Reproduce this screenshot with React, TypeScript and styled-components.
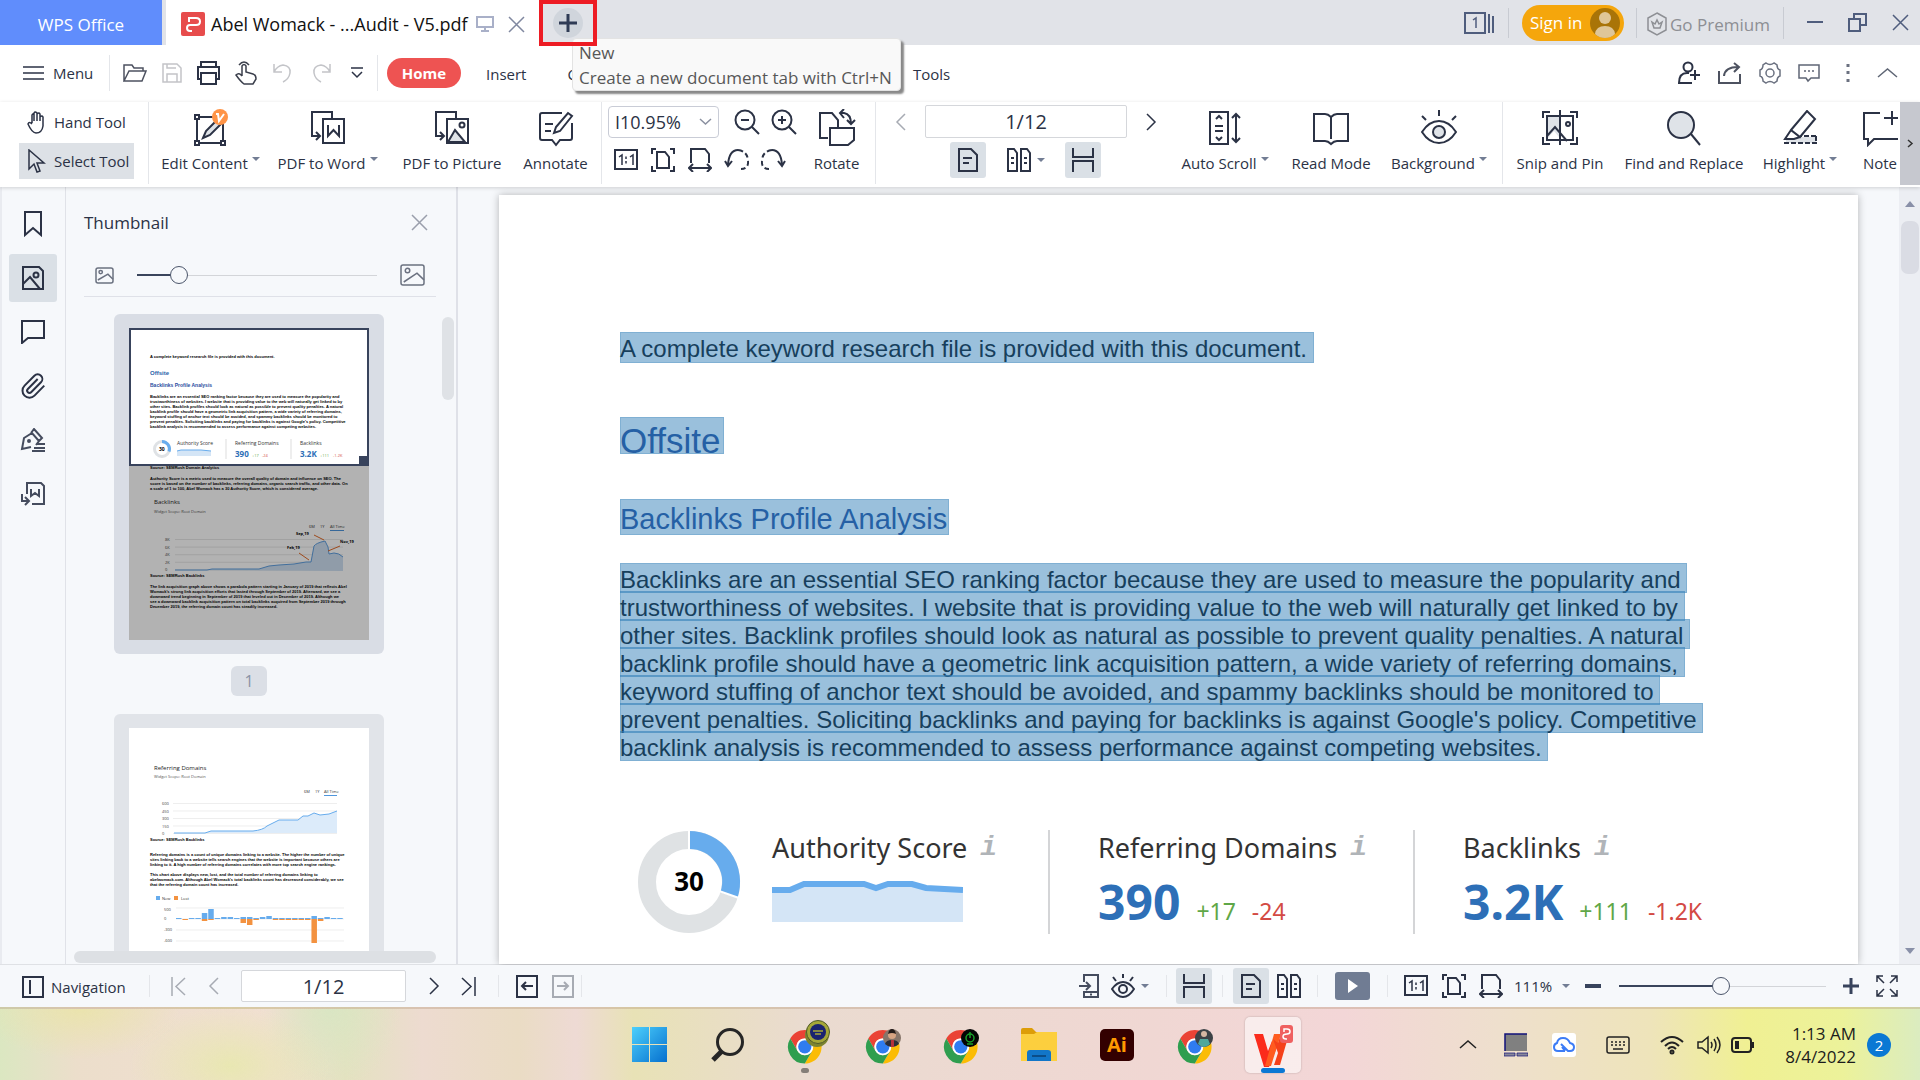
import React, { useState } from 'react';
import styled, { createGlobalStyle } from 'styled-components';

const INK = '#2b3245';
const UI = "'Open Sans', 'Noto Sans', sans-serif";
const DOC = "'Liberation Sans', Arial, sans-serif";

const GlobalStyle = createGlobalStyle`
  *, *::before, *::after { box-sizing: border-box; }
  html, body, #root { height: 100%; }
  body { margin: 0; overflow: hidden; font-family: ${UI}; color: ${INK}; }
  button, input, select { font: inherit; color: inherit; margin: 0; padding: 0; border: 0; background: none; }
  button { cursor: pointer; }
  p, h1, h2, h3 { margin: 0; font-weight: 400; }
  svg { display: block; flex: none; }
`;

/* ---------- icons ---------- */

type IconProps = { w: number; h?: number; c?: string; s?: number; children: React.ReactNode };
const Icon = ({ w, h = w, c = INK, s = 2, children }: IconProps) => (
  <svg width={w} height={h} viewBox={`0 0 ${w} ${h}`} fill="none" stroke={c} strokeWidth={s} aria-hidden="true">
    {children}
  </svg>
);

const OneToOne = () => (
  <Icon w={24}>
    <rect x="1" y="2" width="22" height="19" />
    <path d="M5 9l3-2v10M16 9l3-2v10M12 8.500v2.500M12 13v2.500" strokeWidth="1.500" />
  </Icon>
);
const FitPage = () => (
  <Icon w={24}>
    <path d="M6 4h8l4 5v11H6z" />
    <path d="M1 6V1h4M19 1h4v5M1 18v5h4M19 23h4v-5" />
  </Icon>
);
const FitWidth = () => (
  <Icon w={24}>
    <path d="M3 15V1h14l4 5v9M1 20h22M5 16l-4 4 4 4M19 16l4 4-4 4" />
  </Icon>
);
const SinglePage = () => (
  <Icon w={24}>
    <path d="M3 1h12l6 6v16H3z M7 10h9M7 15h6" />
  </Icon>
);
const TwoPages = () => (
  <Icon w={24}>
    <path d="M1 1h6l3 4v18H1z M14 1h6l3 4v18h-9z M4 10h3M4 15h3M17 10h3M17 15h3" />
  </Icon>
);
const Continuous = () => (
  <Icon w={24}>
    <path d="M2 0v9h20V0M2 24V13h20v11" />
  </Icon>
);
const Chevron = ({ dir, c = INK, w = 12, h = 18 }: { dir: string; c?: string; w?: number; h?: number }) => {
  const d: Record<string, string> = {
    left: `M${w - 2} 1L2 ${h / 2}L${w - 2} ${h - 1}`,
    right: `M2 1L${w - 2} ${h / 2}L2 ${h - 1}`,
    up: `M1 ${h - 2}L${w / 2} 2L${w - 1} ${h - 2}`,
    down: `M1 2L${w / 2} ${h - 2}L${w - 1} 2`,
  };
  return <Icon w={w} h={h} c={c} s={1.5}><path d={d[dir]} /></Icon>;
};
const Cross = ({ size = 17, c = '#7c869b' }) => (
  <Icon w={size} c={c} s={1.5}><path d={`M1 1L${size - 1} ${size - 1}M${size - 1} 1L1 ${size - 1}`} /></Icon>
);
const Picture = ({ w, h, c = '#6b7180' }: { w: number; h: number; c?: string }) => (
  <Icon w={w} h={h} c={c} s={1.5}>
    <rect x="1" y="1" width={w - 2} height={h - 2} rx="2" />
    <circle cx={w * 0.3} cy={h * 0.3} r={w * 0.09} />
    <path d={`M${w * 0.15} ${h - 4}L${w * 0.68} ${h * 0.42}L${w - 1} ${h * 0.72}`} />
  </Icon>
);
const ToWord = () => (
  <Icon w={36}>
    <path d="M2 24V2h20v7M2 23v3h7M6 22l4 4-4 4" />
    <rect x="13" y="9" width="21" height="24" fill="#fff" />
    <path d="M18 15v11l5.500-6 5.500 6V15" />
  </Icon>
);
const ToPicture = () => (
  <Icon w={36}>
    <path d="M2 24V2h20v7M2 23v3h7M6 22l4 4-4 4" />
    <rect x="13" y="9" width="21" height="24" fill="#fff" />
    <path d="M14 32l7-12 10 12z" fill="#dfe3e8" />
    <circle cx="28" cy="15" r="2.500" />
  </Icon>
);
const EditContent = () => (
  <Icon w={36} h={38}>
    <path d="M4 8h26v26H4z" />
    <path d="M2 6h4v4H2zM2 32h4v4H2zM28 32h4v4h-4z" fill="#fff" />
    <path d="M10 29l3-7 12-12 4 4-12 12z" fill="#dfe3e8" />
    <circle cx="27" cy="8" r="8" fill="#ff9447" stroke="none" />
    <path d="M23 5h2l1 7 5-7" stroke="#fff" />
  </Icon>
);
const Annotate = () => (
  <Icon w={36} h={38}>
    <path d="M24 4H4q-2 0-2 2v23q0 2 2 2h10l4 5 4-5h10q2 0 2-2V14M7 15h8M7 22h6" />
    <path d="M16 24l2-6L30 4l4 3-12 15z" fill="#fff" />
  </Icon>
);
const Magnifier = ({ sign }: { sign: string }) => (
  <Icon w={26}>
    <circle cx="11" cy="11" r="9.500" />
    <path d={`M18 18l7 7M7 11h8${sign === '+' ? 'M11 7v8' : ''}`} />
  </Icon>
);
const Turn = ({ cw }: { cw?: boolean }) => (
  <svg width="25" height="22" viewBox="0 0 25 22" fill="none" stroke={INK} strokeWidth="2" aria-hidden="true">
    <g transform={cw ? 'matrix(-1 0 0 1 25 0)' : undefined}>
      <path d="M14 1Q5 1 4 16M1 12l3 5 4-5" />
      <path d="M14 1q9 1 10 10t-7 9" strokeDasharray="5 3" />
    </g>
  </svg>
);
const Rotate = () => (
  <Icon w={38}>
    <path d="M10 29H2V4h12l6 7v7M22 4h4q7 1 7 11M26 0l-4 4 4 5M29 11l4 4 4-4" />
    <path d="M12 19h24v12l-6 5H12z" fill="#fff" />
  </Icon>
);
const AutoScroll = () => (
  <Icon w={32} h={36}>
    <rect x="1" y="2" width="18" height="32" />
    <path d="M7 9l3-3 3 3M7 27l3 3 3-3M6 16h8M6 21h8M27 4v28M23 8l4-4 4 4M23 28l4 4 4-4" />
  </Icon>
);
const ReadMode = () => (
  <Icon w={36} h={36}>
    <path d="M18 7q-3-3-6-3H1v27h11q3 0 6 3 3-3 6-3h11V4H24q-3 0-6 3zM18 7v22" />
  </Icon>
);
const Eye = () => (
  <Icon w={36} h={36}>
    <path d="M1 22q7-11 17-11t17 11q-7 11-17 11T1 22zM18 0v6M1 6l4 4M35 6l-4 4" />
    <circle cx="18" cy="22" r="6" fill="#dfe3e8" />
  </Icon>
);
const SmallEye = () => (
  <Icon w={24} h={26}>
    <path d="M1 16q5-7 11-7t11 7q-5 8-11 8T1 16zM12 1v4M2 4l3 4M22 4l-3 4" />
    <circle cx="12" cy="16" r="4" />
  </Icon>
);
const Snip = () => (
  <Icon w={36} h={36}>
    <rect x="5" y="6" width="26" height="24" />
    <path d="M6 7h11v20l-5-6-6 7z" fill="#dfe3e8" stroke="none" />
    <path d="M1 8V2h7M28 2h7v6M1 27v7h7M28 34h7v-7M18 0v35M5 26l8-9 12 14" />
    <circle cx="26" cy="14" r="2" />
  </Icon>
);
const Find = () => (
  <Icon w={34} h={36}>
    <circle cx="14" cy="15" r="13" fill="#dfe3e8" />
    <path d="M24 24l9 11" />
  </Icon>
);
const Highlight = () => (
  <Icon w={36} h={36}>
    <rect x="4" y="27" width="30" height="6" fill="#dfe3e8" stroke="none" />
    <path d="M2 33h33M34 26H18M34 26v7" strokeDasharray="5 2" />
    <path d="M9 20L25 1l8 8-15 18zM9 20l-6 9h9l6-2" fill="#fff" />
  </Icon>
);
const Note = () => (
  <Icon w={36} h={38}>
    <path d="M18 4H2v26h4v6l6-6h24M30 2v14M22 9h14" />
  </Icon>
);
const Wps = () => (
  <svg width="40" height="44" viewBox="0 0 40 44" aria-hidden="true">
    <path d="M1 11h9l5 17 4-10 5 6-8 20h-5z" fill="#fb2b1c" />
    <path d="M21 11h7l-10 32h-6z" fill="#ff5b1f" />
    <path d="M20 16l5 14-4 12h6l9-31h-8l-3 9z" fill="#f5411a" />
    <rect x="27" y="2" width="13" height="18" rx="3" fill="#ef6060" />
    <path d="M31 9V6h3q3 0 3 2.500T34 11q-4 0-4 2.500T33 16h1" fill="none" stroke="#fff" strokeWidth="1.500" />
  </svg>
);
const Chrome = ({ badge }: { badge: 'crest' | 'man' | 'power' | 'teal' }) => (
  <svg width="50" height="50" viewBox="-7 0 50 50" aria-hidden="true">
    <g transform="translate(1 10) scale(.7)">
      <path d="M24 12H44.780A24 24 0 0 0 3.217 12.005L13.608 30A12 12 0 0 1 24 12z" fill="#ea4335" />
      <path d="M34.390 30L24 48A24 24 0 0 0 44.780 12H24A12 12 0 0 1 34.390 30z" fill="#fbbc05" />
      <path d="M13.607 30L3.215 12A24 24 0 0 0 24 48L34.396 30A12 12 0 0 1 13.607 30z" fill="#2f9e4f" />
      <circle cx="24" cy="24" r="12" fill="#fff" />
      <circle cx="24" cy="24" r="9.500" fill="#2f7cf0" />
    </g>
    {badge === 'crest' && (
      <g>
        <circle cx="30" cy="15" r="12" fill="#7d8430" />
        <circle cx="31" cy="12" r="11.500" fill="#a5a738" stroke="#4f5a2a" />
        <circle cx="31" cy="12" r="8" fill="#1a2370" />
        <path d="M26 11h10M28 14h6" stroke="#a5a738" strokeWidth="1.500" />
      </g>
    )}
    {badge === 'man' && (
      <g>
        <circle cx="27" cy="18" r="9" fill="#86756a" />
        <path d="M20 24q1-4 7-4t7 4q-3 3-7 3t-7-3z" fill="#2b2d38" />
        <path d="M26 20h3v7h-3z" fill="#b5313a" />
        <circle cx="27" cy="15" r="4" fill="#d6a483" />
        <path d="M23 14q1-5 4-5t4 5q-4-2-8 0z" fill="#241c1a" />
      </g>
    )}
    {badge === 'power' && (
      <g>
        <circle cx="27" cy="18" r="9" fill="#050505" />
        <circle cx="27" cy="18" r="4" fill="none" stroke="#18a02a" strokeWidth="1.500" />
        <path d="M27 12v6M24 24h6" stroke="#18a02a" strokeWidth="1.500" />
      </g>
    )}
    {badge === 'teal' && (
      <g>
        <circle cx="27" cy="18" r="9" fill="#3c4246" />
        <path d="M21 24l2-5h8l2 5q-3 3-6 3t-6-3z" fill="#4fa79c" />
        <circle cx="27" cy="14" r="3" fill="#d5b7a2" />
      </g>
    )}
  </svg>
);

/* ---------- shared controls ---------- */

const Shell = styled.div`
  height: 100vh;
  display: flex;
  flex-direction: column;
  overflow: hidden;
`;
const Slot = styled.button<{ $w: number; $h?: number; $on?: boolean }>`
  width: ${p => p.$w}px;
  height: ${p => p.$h ?? 36}px;
  flex: none;
  display: flex;
  align-items: center;
  justify-content: center;
  gap: 6px;
  border-radius: 3px;
  && { background: ${p => (p.$on ? '#dae0e6' : 'transparent')}; }
`;
const Rule = styled.span<{ $h: number; $c?: string; $m?: number }>`
  width: 1px;
  height: ${p => p.$h}px;
  flex: none;
  margin-left: ${p => p.$m ?? 0}px;
  background: ${p => p.$c ?? '#e4e6ea'};
`;
const Gap = styled.span<{ $w?: number }>`
  flex: ${p => (p.$w ? 'none' : 1)};
  width: ${p => (p.$w ? p.$w + 'px' : 'auto')};
`;
const Caret = styled.span<{ $up?: boolean }>`
  width: 0;
  height: 0;
  flex: none;
  align-self: ${p => (p.$up ? 'flex-start' : 'center')};
  margin-top: ${p => (p.$up ? 4 : 0)}px;
  border: 4px solid transparent;
  border-top-color: #727d94;
  border-bottom: 0;
`;

/* ---------- title bar ---------- */

const TitleBar = styled.header`
  height: 45px;
  flex: none;
  display: flex;
  align-items: center;
  background: #e1e3e8;
`;
const HomeTab = styled.button`
  && { width: 162px; height: 45px; padding-top: 3px; margin-right: 4px; background: #608dfc; color: #fff; font-size: 17px; }
`;
const DocTab = styled.div`
  width: 373px;
  height: 45px;
  padding: 3px 14px 0 15px;
  display: flex;
  align-items: center;
  background: #fff;
  color: #111;
  font-size: 18px;
  white-space: nowrap;
`;
const TabName = styled.span`
  flex: 1;
  margin-left: 6px;
`;
const NewTab = styled.button`
  && { width: 58px; height: 46px; border: 4px solid #ed1c24; }
  align-self: flex-start;
  display: grid;
  place-items: center;
  position: relative;
  z-index: 3;
  svg { border-radius: 50%; background: #d0d5dc; }
`;
const SignIn = styled.button`
  && { margin: 0 12px 0 13px; padding: 0 4px 0 8px; background: #f5a60c; color: #fff; font-size: 17px; }
  width: 102px;
  height: 36px;
  display: flex;
  align-items: center;
  justify-content: space-between;
  border-radius: 18px;
  white-space: nowrap;
`;
const Premium = styled.button`
  && { width: 146px; padding: 3px 0 0 9px; color: #8d8f94; font-size: 17px; }
  display: flex;
  align-items: center;
  gap: 2px;
  white-space: nowrap;
`;
const Tooltip = styled.div`
  position: absolute;
  z-index: 2;
  left: 572px;
  top: 38px;
  padding: 1px 8px 0 6px;
  height: 53px;
  border: 1px solid #e3e3e3;
  border-radius: 4px;
  background: #f9f9f9;
  box-shadow: 3px 3px 2px #888;
  color: #575757;
  font-size: 17px;
  line-height: 25px;
  white-space: nowrap;
`;

/* ---------- menu row ---------- */

const MenuRow = styled.nav`
  height: 57px;
  flex: none;
  padding-bottom: 2px;
  display: flex;
  align-items: center;
  background: #fff;
  font-size: 15px;
`;
const MenuButton = styled.button`
  && { width: 109px; height: 36px; padding-left: 23px; }
  display: flex;
  align-items: center;
  gap: 9px;
`;
const Pill = styled.button`
  && { margin: 0 12px 0 9px; background: #ee5352; color: #fff; font-weight: 700; }
  width: 74px;
  height: 30px;
  border-radius: 15px;
`;
const MenuTab = styled.button<{ $ml: number }>`
  && { margin-left: ${p => p.$ml}px; padding-top: 2px; }
`;

/* ---------- ribbon ---------- */

const RibbonBar = styled.section`
  height: 85px;
  flex: none;
  display: flex;
  background: #fff;
  position: relative;
  z-index: 1;
  box-shadow: 0 1px 4px rgba(0, 0, 0, 0.16);
  font-size: 15px;
`;
const Ribbon = styled.div`
  flex: 1;
  min-width: 0;
  margin-right: 2px;
  display: flex;
  overflow: hidden;
`;
const ModeGroup = styled.div`
  width: 148px;
  flex: none;
  padding: 2px 14px 0 19px;
  display: flex;
  flex-direction: column;
  gap: 3px;
`;
const Mode = styled.button<{ $on?: boolean }>`
  && { height: 36px; padding-left: 8px; background: ${p => (p.$on ? '#dde1e6' : 'transparent')}; }
  display: flex;
  align-items: center;
  gap: 8px;
  white-space: nowrap;
`;
const Tool = styled.button<{ $w: number }>`
  width: ${p => p.$w}px;
  height: 82px;
  flex: none;
  display: flex;
  flex-direction: column;
  align-items: center;
  white-space: nowrap;
`;
const ToolArt = styled.span`
  height: 51px;
  display: grid;
  place-items: center;
`;
const ToolLabel = styled.span`
  display: flex;
  gap: 4px;
  line-height: 20px;
`;
const TwoRows = styled.div`
  flex: none;
  padding-top: 3px;
  display: flex;
  flex-direction: column;
  gap: 4px;
`;
const Row = styled.div<{ $center?: boolean }>`
  display: flex;
  align-items: center;
  justify-content: ${p => (p.$center ? 'center' : 'flex-start')};
  height: 33px;
  & + & { height: 36px; }
`;
const Combo = styled.label`
  width: 111px;
  height: 32px;
  margin: 0 9px 0 1px;
  padding: 0 6px;
  display: flex;
  align-items: center;
  border: 1px solid #c9ccd6;
  border-radius: 4px;
  font-size: 18px;
  select { flex: 1; min-width: 0; appearance: none; outline: none; }
`;
const PageBox = styled.input<{ $w: number; $h: number }>`
  && {
    width: ${p => p.$w}px;
    height: ${p => p.$h}px;
    border: 1px solid #d5d7db;
    border-radius: 2px;
    background: #fff;
    text-align: center;
    font-size: 20px;
  }
`;
const More = styled.button`
  && { width: 20px; height: 83px; background: #c6c8cf; }
  display: grid;
  place-items: center;
`;

const RibbonTool = ({ w, label, caret, children }: { w: number; label: string; caret?: boolean; children: React.ReactNode }) => (
  <Tool $w={w}>
    <ToolArt>{children}</ToolArt>
    <ToolLabel>{label}{caret && <Caret $up />}</ToolLabel>
  </Tool>
);

/* ---------- workspace ---------- */

const Workspace = styled.div`
  flex: 1;
  min-height: 0;
  display: flex;
  background: #f6f8fb;
  border-bottom: 1px solid #dfe1e5;
`;
const Rail = styled.aside`
  width: 66px;
  flex: none;
  padding: 13px 0 0 7px;
  display: flex;
  flex-direction: column;
  gap: 6px;
  border-left: 2px solid #e9ebf0;
  border-right: 1px solid #e0e2e8;
`;
const Panel = styled.aside`
  width: 392px;
  flex: none;
  display: flex;
  flex-direction: column;
  border-right: 2px solid #dfe1e8;
`;
const PanelHead = styled.div`
  height: 67px;
  flex: none;
  padding: 4px 28px 0 18px;
  display: flex;
  align-items: center;
  justify-content: space-between;
  font-size: 17px;
`;
const SizeRow = styled.div`
  height: 43px;
  flex: none;
  margin: 0 20px 0 18px;
  padding: 0 11px;
  display: flex;
  align-items: center;
  justify-content: space-between;
  border-bottom: 1px solid #dfe1e8;
`;
const Slider = styled.input<{ $w: number; $dot: number }>`
  && { width: ${p => p.$w}px; height: 20px; appearance: none; outline: none; }
  &::-webkit-slider-runnable-track {
    height: 18px;
    background:
      linear-gradient(#3a455c, #3a455c) left center / var(--fill) 2px no-repeat,
      linear-gradient(#d3d5d9, #d3d5d9) left center / 100% 1px no-repeat;
  }
  &::-webkit-slider-thumb {
    appearance: none;
    width: ${p => p.$dot}px;
    height: ${p => p.$dot}px;
    border: 1px solid #4b556a;
    border-radius: 50%;
    background: #f6f8fb;
  }
`;
const ListArea = styled.div`
  flex: 1;
  min-height: 0;
  display: flex;
`;
const ThumbList = styled.div`
  flex: 1;
  overflow: hidden;
  padding: 17px 12px 0 2px;
  display: flex;
  flex-direction: column;
  align-items: center;
  gap: 12px;
`;
const Card = styled.div<{ $on?: boolean }>`
  width: 270px;
  flex: none;
  padding: 14px 15px;
  border-radius: 6px;
  background: ${p => (p.$on ? '#d9dde5' : '#e1e4e9')};
`;
const ThumbPage = styled.div`
  position: relative;
  width: 240px;
  height: 312px;
  padding-left: 21px;
  overflow: hidden;
  background: #fff;
  color: #000;
  font: 700 4px/5px ${DOC};
  white-space: nowrap;
`;
const Tiny = styled.p<{ $mt: number; $size?: number; $lh?: number; $c?: string }>`
  && { margin-top: ${p => p.$mt}px; font-weight: 700; }
  font-size: ${p => p.$size ?? 4}px;
  line-height: ${p => p.$lh ?? 5}px;
  color: ${p => p.$c ?? '#000'};
  white-space: pre;
`;
const TinyArt = styled.div<{ $mt: number }>`
  margin-top: ${p => p.$mt}px;
  text { font-family: ${UI}; font-weight: 400; stroke: none; }
  text.bold { font-weight: 700; }
`;
const Shade = styled.div`
  position: absolute;
  inset: 138px 0 0 0;
  background: rgba(0, 0, 0, 0.3);
`;
const ViewFrame = styled.div`
  position: absolute;
  inset: 0 0 174px 0;
  border: 2px solid #38435c;
  &::after {
    content: '';
    position: absolute;
    right: 0;
    bottom: 0;
    width: 8px;
    height: 8px;
    background: #38435c;
  }
`;
const PageNo = styled.span`
  width: 36px;
  height: 30px;
  margin-bottom: 6px;
  display: grid;
  place-items: center;
  flex: none;
  border-radius: 6px;
  background: #dbdfe6;
  color: #8a93a5;
  font-size: 16px;
`;
const VBar = styled.div`
  width: 14px;
  padding-top: 20px;
  &::before { content: ''; display: block; width: 12px; height: 83px; border-radius: 6px; background: #dfe2e6; }
`;
const HBar = styled.div`
  height: 13px;
  flex: none;
  padding: 0 20px 0 8px;
  &::before { content: ''; display: block; height: 12px; border-radius: 6px; background: #dde0e4; }
`;

/* ---------- document ---------- */

const Canvas = styled.main`
  flex: 1;
  min-width: 0;
  display: flex;
  padding: 8px 0 0 41px;
`;
const Sheet = styled.article`
  flex: 1;
  min-width: 0;
  margin-right: 41px;
  padding: 137px 121px 0;
  background: #fff;
  box-shadow: 0 0 8px rgba(0, 0, 0, 0.28);
  font-family: ${DOC};
  color: #173f5c;
  overflow: hidden;
  white-space: nowrap;
`;
const Mark = styled.span`
  display: inline-block;
  background: rgba(53, 129, 185, 0.5);
  box-shadow: inset 0 0 0 1px rgba(53, 129, 185, 0.25);
  white-space: pre;
`;
const Lead = styled.p`
  font-size: 24px;
  line-height: 33px;
  height: 31px;
  ${Mark} { height: 31px; }
`;
const H1 = styled.h1`
  && { margin-top: 54px; }
  height: 37px;
  font-size: 35px;
  line-height: 48px;
  color: #2560a5;
  ${Mark} { height: 37px; padding-right: 3px; }
`;
const H2 = styled.h2`
  && { margin-top: 45px; }
  height: 36px;
  font-size: 29px;
  line-height: 40px;
  color: #2560a5;
  ${Mark} { height: 36px; padding-right: 2px; }
`;
const Body = styled.div`
  margin-top: 28px;
  font-size: 24px;
  line-height: 34px;
  p { height: 28px; }
  ${Mark} { height: 30px; }
`;
const Stats = styled.div`
  margin-top: 71px;
  padding-left: 18px;
  display: flex;
  align-items: flex-start;
  font-family: 'Noto Sans', 'Open Sans', sans-serif;
  color: #333;
`;
const Stat = styled.div<{ $w: number; $line?: boolean }>`
  width: ${p => p.$w}px;
  height: 104px;
  flex: none;
  border-right: ${p => (p.$line ? '2px solid #d4d5d7' : '0')};
`;
const StatTitle = styled.h3`
  display: flex;
  align-items: center;
  gap: 13px;
  font-size: 27px;
  line-height: 36px;
  i { color: #b0b4b8; font: italic 700 28px/30px 'Liberation Mono', monospace; }
`;
const Figures = styled.p`
  && { margin-top: 6px; }
  display: flex;
  align-items: baseline;
  gap: 16px;
  font-size: 23px;
  line-height: 60px;
  strong { font-size: 48px; color: #2d6fb7; }
  ins { text-decoration: none; color: #5fa747; }
  del { text-decoration: none; color: #d34a44; }
`;
const Scroller = styled.div`
  width: 21px;
  flex: none;
  margin-top: -8px;
  padding: 14px 1px 10px;
  display: flex;
  flex-direction: column;
  align-items: center;
  gap: 14px;
  background: #eceef3;
`;
const Grip = styled.span`
  width: 18px;
  height: 53px;
  margin-bottom: auto;
  border-radius: 7px;
  background: #dadce4;
`;
const Arrow = styled.button<{ $down?: boolean }>`
  && {
    border: 5px solid transparent;
    border-${p => (p.$down ? 'top' : 'bottom')}: 6px solid #8990a8;
    border-${p => (p.$down ? 'bottom' : 'top')}: 0;
  }
`;

/* ---------- status bar and taskbar ---------- */

const StatusBar = styled.footer`
  height: 42px;
  flex: none;
  display: flex;
  align-items: center;
  background: #f6f8fb;
  font-size: 15px;
`;
const NavToggle = styled.button`
  && { width: 149px; height: 36px; padding: 2px 0 0 22px; }
  display: flex;
  align-items: center;
  gap: 7px;
`;
const Play = styled.button`
  && { width: 35px; height: 28px; margin: 0 17px; background: #707c93; }
  display: grid;
  place-items: center;
  border-radius: 3px;
`;
const ZoomPick = styled.label`
  width: 66px;
  display: flex;
  align-items: center;
  justify-content: center;
  gap: 6px;
  font-size: 15px;
  select { appearance: none; outline: none; width: 42px; }
`;
const TaskBar = styled.footer`
  height: 73px;
  flex: none;
  display: flex;
  align-items: center;
  color: #1c1c1c;
  border-top: 2px solid rgba(180, 150, 120, 0.35);
  background:
    radial-gradient(ellipse 100px 50px at 80px 0, rgba(234, 228, 170, 0.9), transparent),
    radial-gradient(ellipse 100px 60px at 230px 80%, rgba(232, 232, 175, 0.9), transparent),
    radial-gradient(ellipse 70px 80px at 330px 0, rgba(216, 230, 195, 0.9), transparent),
    linear-gradient(90deg, #dbe7c1 0, #ecdecb 4%, #f1dfd2 14%, #e4e2c0 18%, #eddbd0 22%, #eadcc4 27%, #eedad4 30%, #e8e2b6 33%,
      #eadbd0 42%, #f0d7d3 60%, #f3d6d7 70%, #eedfcd 78%, #eee4ba 86%, #f0f093 91%, #ecf29a 96%, #dbecc0 100%);
`;
const Apps = styled.div`
  display: flex;
  margin-left: auto;
`;
const AppButton = styled.button<{ $dot?: boolean; $on?: boolean }>`
  && { margin: 0 11px; background: ${p => (p.$on ? 'rgba(255,255,255,.55)' : 'none')}; }
  position: relative;
  width: 56px;
  height: 56px;
  display: grid;
  place-items: center;
  border-radius: 5px;
  box-shadow: ${p => (p.$on ? '0 0 2px rgba(0,0,0,.25)' : 'none')};
  &::after {
    content: '';
    display: ${p => (p.$dot || p.$on ? 'block' : 'none')};
    position: absolute;
    bottom: 0;
    width: ${p => (p.$on ? 24 : 8)}px;
    height: 5px;
    border-radius: 3px;
    background: ${p => (p.$on ? '#0b78d4' : '#857e78')};
  }
`;
const AiLogo = styled.span`
  width: 34px;
  height: 32px;
  display: grid;
  place-items: center;
  border-radius: 5px;
  background: #300;
  color: #ff9a00;
  font-weight: 700;
  font-size: 20px;
  line-height: 20px;
`;
const Tray = styled.div`
  width: 469px;
  margin-left: 139px;
  display: flex;
  align-items: center;
`;
const Clock = styled.button`
  && { padding-right: 4px; font-size: 17px; line-height: 23px; }
  width: 95px;
  text-align: right;
  white-space: nowrap;
`;
const Count = styled.span`
  width: 24px;
  height: 24px;
  margin-left: 7px;
  display: grid;
  place-items: center;
  border-radius: 50%;
  background: #0a78d4;
  color: #fff;
  font-size: 15px;
  line-height: 24px;
`;

/* ---------- content ---------- */

const bodyLines = [
  'Backlinks are an essential SEO ranking factor because they are used to measure the popularity and ',
  'trustworthiness of websites. I website that is providing value to the web will naturally get linked to by ',
  'other sites. Backlink profiles should look as natural as possible to prevent quality penalties. A natural ',
  'backlink profile should have a geometric link acquisition pattern, a wide variety of referring domains, ',
  'keyword stuffing of anchor text should be avoided, and spammy backlinks should be monitored to ',
  'prevent penalties. Soliciting backlinks and paying for backlinks is against Google\'s policy. Competitive ',
  'backlink analysis is recommended to assess performance against competing websites. ',
];

const Thumbnails = () => (
  <ThumbList>
    <Card $on>
      <ThumbPage>
        <Tiny $mt={26}>A complete keyword research file is provided with this document.</Tiny>
        <Tiny $mt={10} $size={6} $lh={8} $c="#2a62a8">Offsite</Tiny>
        <Tiny $mt={5} $size={5} $lh={7} $c="#2a4ea0">Backlinks Profile Analysis</Tiny>
        <Tiny $mt={5}>{bodyLines.join('\n')}</Tiny>
        <TinyArt $mt={7}>
          <svg width="200" height="26" viewBox="0 0 200 26" aria-hidden="true">
            <circle cx="12" cy="13" r="7.500" fill="none" stroke="#dfe2e5" strokeWidth="3" />
            <path d="M12 5.500A7.500 7.500 0 0 1 19 15.500" fill="none" stroke="#67aced" strokeWidth="3" />
            <text x="9" y="15" fontSize="5" className="bold">30</text>
            <text x="27" y="9" fontSize="5" fill="#333">Authority Score</text>
            <path d="M27 15l4-1h20l10 1v5H27z" fill="#d4e5f6" />
            <path d="M27 15l4-1h20l10 1" fill="none" stroke="#67aced" />
            <path d="M76 3v20M141 3v20" stroke="#ddd" />
            <text x="85" y="9" fontSize="5" fill="#333">Referring Domains</text>
            <text x="85" y="21" fontSize="8" className="bold" fill="#2d6fb7">390</text>
            <text x="102" y="21" fontSize="4" fill="#5fa747">+17</text>
            <text x="112" y="21" fontSize="4" fill="#d34a44">-24</text>
            <text x="150" y="9" fontSize="5" fill="#333">Backlinks</text>
            <text x="150" y="21" fontSize="8" className="bold" fill="#2d6fb7">3.2K</text>
            <text x="170" y="21" fontSize="4" fill="#5fa747">+111</text>
            <text x="183" y="21" fontSize="4" fill="#d34a44">-1.2K</text>
          </svg>
        </TinyArt>
        <Tiny $mt={3}>Source: SEMRush Domain Analytics</Tiny>
        <Tiny $mt={6}>{'Authority Score is a metric used to measure the overall quality of domain and influence on SEO. The\nscore is based on the number of backlinks, referring domains, organic search traffic, and other data. On\na scale of 1 to 100, Abel Womack has a 30 Authority Score, which is considered average.'}</Tiny>
        <TinyArt $mt={5}>
          <svg width="210" height="76" viewBox="0 0 210 76" fill="none" aria-hidden="true">
            <text x="4" y="8" fontSize="6" fill="#222">Backlinks</text>
            <text x="4" y="17" fontSize="4" fill="#555">Widget Scope: Root Domain</text>
            <text x="159" y="32" fontSize="4" fill="#333">6M</text>
            <text x="170" y="32" fontSize="4" fill="#333">1Y</text>
            <text x="180" y="32" fontSize="4" fill="#333">All Time</text>
            <path d="M180 34.500h14" stroke="#4f96dc" />
            {['8K', '6K', '4K', '2K', '0'].map((t, i) => (
              <g key={t}>
                <text x="15" y={45 + i * 7.6} fontSize="4" fill="#444">{t}</text>
                <path d={`M25 ${43.5 + i * 7.6}H193`} stroke="#ddd" strokeWidth=".7" />
              </g>
            ))}
            <path d="M25 74h32l5-1h35l12 0 10-3 10-1 15-1 12-2h5l3-16q2-3 11-5l3 6 1 7 5-1q5 0 9 4v14z" fill="#cfe0f2" />
            <path d="M25 74h32l5-1h35l12 0 10-3 10-1 15-1 12-2h5l3-16q2-3 11-5l3 6 1 7 5-1q5 0 9 4" stroke="#5f9fe0" />
            <path d="M164 39l10 5M190 50l-12 5M149 57l10 7" stroke="#e26a28" />
            <text x="146" y="39" fontSize="4" fill="#000" className="bold">Sep,19</text>
            <text x="190" y="47" fontSize="4" fill="#000" className="bold">Nov,19</text>
            <text x="137" y="53" fontSize="4" fill="#000" className="bold">Feb,19</text>
          </svg>
        </TinyArt>
        <Tiny $mt={1}>Source: SEMRush Backlinks</Tiny>
        <Tiny $mt={6}>{'The link acquisition graph above shows a parabola pattern starting in January of 2019 that reflects Abel\nWomack\'s strong link acquisition efforts that lasted through September of 2019. Afterward, we see a\ndownward trend beginning in September of 2019 that leveled out in December of 2019. Although we\nsee a downward backlink acquisition pattern on total backlinks acquired from September 2019 through\nDecember 2019, the referring domain count has steadily increased.'}</Tiny>
        <Shade />
        <ViewFrame />
      </ThumbPage>
    </Card>
    <PageNo>1</PageNo>
    <Card>
      <ThumbPage>
        <TinyArt $mt={34}>
          <svg width="210" height="74" viewBox="0 0 210 74" fill="none" aria-hidden="true">
            <text x="4" y="8" fontSize="6" fill="#222">Referring Domains</text>
            <text x="4" y="16" fontSize="4" fill="#555">Widget Scope: Root Domain</text>
            <text x="154" y="31" fontSize="4" fill="#333">6M</text>
            <text x="165" y="31" fontSize="4" fill="#333">1Y</text>
            <text x="174" y="31" fontSize="4" fill="#333">All Time</text>
            <path d="M174 33.500h13" stroke="#4f96dc" />
            {['600', '450', '300', '150', '0'].map((t, i) => (
              <g key={t}>
                <text x="12" y={43 + i * 7.5} fontSize="4" fill="#444">{t}</text>
                <path d={`M23 ${41.5 + i * 7.5}H187`} stroke="#e6e6e6" strokeWidth=".7" />
              </g>
            ))}
            <path d="M24 71h31l6-2h42q10-1 14-5l12-6h19l5-4h5l6-3 6 2 9-1 8-3v22z" fill="#dcebfa" />
            <path d="M24 71h31l6-2h42q10-1 14-5l12-6h19l5-4h5l6-3 6 2 9-1 8-3" stroke="#67aced" />
          </svg>
        </TinyArt>
        <Tiny $mt={1}>Source: SEMRush Backlinks</Tiny>
        <Tiny $mt={10}>{'Referring domains is a count of unique domains linking to a website. The higher the number of unique\nsites linking back to a website tells search engines that the website is important because others are\nlinking to it. A high number of referring domains correlates with more top search engine rankings.'}</Tiny>
        <Tiny $mt={5}>{'This chart above displays new, lost, and the total number of referring domains linking to\nabelwomack.com. Although Abel Womack\'s total backlinks count has decreased considerably, we see\nthat the referring domain count has increased.'}</Tiny>
        <TinyArt $mt={6}>
          <svg width="210" height="66" viewBox="0 0 210 66" fill="none" aria-hidden="true">
            <path d="M6 3h4v4H6z" fill="#67aced" /><text x="12" y="6.500" fontSize="4" fill="#333">New</text>
            <path d="M24 3h4v4h-4z" fill="#f39240" /><text x="31" y="6.500" fontSize="4" fill="#333">Lost</text>
            {['500', '0', '-300', '-600'].map((t, i) => (
              <g key={t}>
                <text x="14" y={[18, 27, 38, 49][i]} fontSize="4" fill="#444">{t}</text>
                <path d={`M26 ${[15, 26, 37, 48][i]}h168`} stroke="#e6e6e6" strokeWidth=".7" />
              </g>
            ))}
            {[1, 0, 1, 1, 6, 10, 1, 2, 2, 1, 2, 2, 1, 2, 3, 1, 1, 1, 1, 1, 1, 3, 1, 2, 1, 1].map((v, i) => (
              <rect key={i} x={26 + i * 6.45} y={26 - v} width="5.500" height={v} fill="#67aced" />
            ))}
            {[0, 1, 0, 0, 2, 1, 0, 0, 0, 0, 4, 6, 1, 0, 0, 1, 1, 1, 1, 1, 1, 24, 2, 0, 0, 0].map((v, i) => (
              <rect key={i} x={26 + i * 6.45} y="26" width="5.500" height={v} fill="#f39240" />
            ))}
          </svg>
        </TinyArt>
      </ThumbPage>
    </Card>
  </ThumbList>
);

export default function App() {
  const [page, setPage] = useState('1/12');
  const [size, setSize] = useState(15);
  const [zoom, setZoom] = useState(49);
  const gray = '#a7abb3';
  return (
    <Shell>
      <GlobalStyle />
      <TitleBar>
        <HomeTab>WPS Office</HomeTab>
        <DocTab>
          <svg width="24" height="24" viewBox="0 0 24 24" aria-hidden="true">
            <rect width="24" height="24" rx="2" fill="#e74c4c" />
            <path d="M8 10V6h7q4 0 4 3.500T15 13H9q-3 0-3 3t3 3h2" fill="none" stroke="#fff" strokeWidth="2" />
          </svg>
          <TabName>Abel Womack - ...Audit - V5.pdf</TabName>
          <Icon w={18} c="#a9b0c8"><path d="M1 2h16v10H1zM9 12v4M5 16h8" /></Icon>
          <Gap $w={14} />
          <Slot $w={17} $h={24} aria-label="Close tab"><Cross c="#8088a0" /></Slot>
        </DocTab>
        <NewTab aria-label="New tab">
          <Icon w={30} c="#2f3b55" s={3}><path d="M6 15h18M15 6v18" /></Icon>
        </NewTab>
        <Gap />
        <Icon w={31} h={24} c="#4f5d7d">
          <path d="M1 2h20v20H1zM25 3v19M29 5v17" /><path d="M9 9l3-2v10" strokeWidth="1.500" />
        </Icon>
        <Gap $w={13} />
        <Rule $h={30} $c="#c8cbd2" />
        <SignIn>
          Sign in
          <svg width="30" height="30" viewBox="0 0 30 30" aria-hidden="true">
            <circle cx="15" cy="15" r="15" fill="#a97408" />
            <circle cx="15" cy="10" r="6" fill="#dfc698" />
            <path d="M5 26q1-8 10-8t10 8q-4 4-10 4T5 26z" fill="#dfc698" />
          </svg>
        </SignIn>
        <Rule $h={30} $c="#c8cbd2" />
        <Premium>
          <Icon w={22} h={24} c="#8d8f94" s={1.5}>
            <path d="M11 1l9 5v12l-9 5-9-5V6zM6 10l2 6h6l2-6-3 2-2-4-2 4z" />
          </Icon>
          Go Premium
        </Premium>
        <Rule $h={32} $c="#c8cbd2" />
        <Slot $w={62} aria-label="Minimize"><Icon w={16} c="#4f5d7d"><path d="M0 7h16" /></Icon></Slot>
        <Slot $w={22} aria-label="Restore"><Icon w={19} c="#4f5d7d"><path d="M1 6h11v12H1zM6 6V1h12v11h-6" /></Icon></Slot>
        <Gap $w={12} />
        <Slot $w={40} aria-label="Close"><Cross c="#4f5d7d" /></Slot>
      </TitleBar>
      <Tooltip role="tooltip">New<br />Create a new document tab with Ctrl+N</Tooltip>

      <MenuRow>
        <MenuButton><Icon w={21} h={16} s={1.5}><path d="M0 2h21M0 8h21M0 14h21" /></Icon>Menu</MenuButton>
        <Rule $h={36} />
        <Slot $w={49} aria-label="Open"><Icon w={24} h={20} c="#4d5260" s={1.5}><path d="M1 18V2h8l2 3h9v3M1 18l5-10h17l-4 10z" /></Icon></Slot>
        <Slot $w={25} aria-label="Save"><Icon w={20} c="#c3c4c8" s={1.5}><path d="M1 1h14l4 4v14H1zM5 1v4h9M5 19v-8h10v8" /></Icon></Slot>
        <Slot $w={49} aria-label="Print"><Icon w={24}><path d="M4 6V1h15v5M4 18H1V6h21v12h-3M4 12h15v11H4z" /></Icon></Slot>
        <Slot $w={26} aria-label="Touch mode">
          <Icon w={22} h={24} c="#3b3f4c" s={1.5}><path d="M7 15V5q2-3 4 0v6l7 2q3 1 3 5l-3 5H9q-3-2-8-9 3-3 6 1M4 4q5-6 10 0" /></Icon>
        </Slot>
        <Slot $w={46} aria-label="Undo"><Icon w={19} h={20} c="#c3c4c8" s={1.5}><path d="M1 1v8h8M1 9q3-6 9-7 8 1 7 8-1 6-7 9" /></Icon></Slot>
        <Slot $w={32} aria-label="Redo"><Icon w={19} h={20} c="#c3c4c8" s={1.5}><path d="M18 1v8h-8M18 9q-3-6-9-7-8 1-7 8 1 6 7 9" /></Icon></Slot>
        <Slot $w={40} aria-label="Customize"><Icon w={12} s={1.5}><path d="M0 1h12M1 5l5 5 5-5" /></Icon></Slot>
        <Rule $h={36} />
        <Pill>Home</Pill>
        <MenuTab $ml={13}>Insert</MenuTab>
        <MenuTab $ml={41} aria-label="Comment">C</MenuTab>
        <MenuTab $ml={336}>Tools</MenuTab>
        <Gap />
        <Slot $w={41} aria-label="Invite"><Icon w={22} h={24}><circle cx="10" cy="6" r="4.500" /><path d="M14 22H1q0-10 8-10h2M17 9v10M12 14h10" /></Icon></Slot>
        <Slot $w={41} aria-label="Share"><Icon w={23} h={22} c="#4d5260"><path d="M1 9v12h21V12M6 14q1-9 14-9M16 1l5 4-5 5" /></Icon></Slot>
        <Slot $w={39} aria-label="Settings"><Icon w={22} h={24} c="#6b7180" s={1.5}><path d="M7 2q4 3 8 0l3 2q0 4 3 5v6q-3 1-3 5l-3 2q-4-3-8 0l-3-2q0-4-3-5V9q3-1 3-5z" /><circle cx="11" cy="12" r="4" /></Icon></Slot>
        <Slot $w={39} aria-label="Feedback"><Icon w={22} h={20} c="#5f6675" s={1.5}><path d="M1 2h20v13h-8l-3 3-2-3H1zM6 8h2M10 8h2M14 8h2" /></Icon></Slot>
        <Slot $w={39} aria-label="More"><Icon w={4} h={20} c="#6b7180" s={3}><path d="M2 1v3M2 8v3M2 16v3" /></Icon></Slot>
        <Slot $w={40} aria-label="Collapse ribbon"><Chevron dir="up" w={21} h={12} c="#5f6675" /></Slot>
        <Gap $w={13} />
      </MenuRow>

      <RibbonBar>
        <Ribbon>
          <ModeGroup>
            <Mode>
              <Icon w={19} h={24} s={1.5}><path d="M5 13V5q1-2 2 0V3q1-2 3 0v1q2-2 3 0v3q2-2 3 0v9q-1 7-7 7-4 0-8-9 1-3 4 0M7 5v6M10 3v8M13 4v7" /></Icon>
              Hand Tool
            </Mode>
            <Mode $on>
              <Icon w={19} h={24} s={1.5}><path d="M2 1v19l5-5 3 8 3-1-3-8h7z" /></Icon>
              Select Tool
            </Mode>
          </ModeGroup>
          <Rule $h={82} />
          <RibbonTool w={123} label="Edit Content" caret><EditContent /></RibbonTool>
          <RibbonTool w={111} label="PDF to Word" caret><ToWord /></RibbonTool>
          <RibbonTool w={138} label="PDF to Picture"><ToPicture /></RibbonTool>
          <RibbonTool w={69} label="Annotate"><Annotate /></RibbonTool>
          <Rule $h={82} $m={11} />
          <Gap $w={5} />
          <TwoRows>
            <Row>
              <Combo>
                <select aria-label="Zoom level"><option>I10.95%</option></select>
                <Chevron dir="down" w={13} h={9} c="#8a90a0" />
              </Combo>
              <Slot $w={37} aria-label="Zoom out"><Magnifier sign="-" /></Slot>
              <Slot $w={37} aria-label="Zoom in"><Magnifier sign="+" /></Slot>
            </Row>
            <Row>
              <Slot $w={37} aria-label="Actual size"><OneToOne /></Slot>
              <Slot $w={37} aria-label="Fit page"><FitPage /></Slot>
              <Slot $w={37} aria-label="Fit width"><FitWidth /></Slot>
              <Slot $w={37} aria-label="Rotate left"><Turn /></Slot>
              <Slot $w={37} aria-label="Rotate right"><Turn cw /></Slot>
            </Row>
          </TwoRows>
          <RibbonTool w={69} label="Rotate"><Rotate /></RibbonTool>
          <Rule $h={82} $m={4} />
          <TwoRows>
            <Row>
              <Slot $w={49} aria-label="Previous page"><Chevron dir="left" c={gray} /></Slot>
              <PageBox $w={202} $h={33} aria-label="Page" value={page} onChange={e => setPage(e.target.value)} />
              <Slot $w={48} aria-label="Next page"><Chevron dir="right" /></Slot>
            </Row>
            <Row $center>
              <Slot $w={36} $on aria-label="Single page"><SinglePage /></Slot>
              <Slot $w={79} aria-label="Two pages"><TwoPages /><Caret /></Slot>
              <Slot $w={36} $on aria-label="Continuous"><Continuous /></Slot>
            </Row>
          </TwoRows>
          <RibbonTool w={100} label="Auto Scroll" caret><AutoScroll /></RibbonTool>
          <RibbonTool w={112} label="Read Mode"><ReadMode /></RibbonTool>
          <RibbonTool w={104} label="Background" caret><Eye /></RibbonTool>
          <Rule $h={82} $m={11} />
          <RibbonTool w={114} label="Snip and Pin"><Snip /></RibbonTool>
          <RibbonTool w={134} label="Find and Replace"><Find /></RibbonTool>
          <RibbonTool w={98} label="Highlight" caret><Highlight /></RibbonTool>
          <RibbonTool w={62} label="Note"><Note /></RibbonTool>
        </Ribbon>
        <More aria-label="More tools"><Chevron dir="right" w={8} h={9} c="#333" /></More>
      </RibbonBar>

      <Workspace>
        <Rail>
          <Slot $w={48} $h={48} aria-label="Bookmarks"><Icon w={18} h={26}><path d="M1 1h16v23l-8-7-8 7z" /></Icon></Slot>
          <Slot $w={48} $h={48} $on aria-label="Thumbnails">
            <Icon w={22} h={24}><path d="M1 1h16l4 4v18H1zM1 18l7-7 10 12" /><circle cx="14" cy="9" r="2.500" /></Icon>
          </Slot>
          <Slot $w={48} $h={48} aria-label="Comments"><Icon w={24}><path d="M1 1h22v17H7l-6 5z" /></Icon></Slot>
          <Slot $w={48} $h={48} aria-label="Attachments">
            <svg width="28" height="28" viewBox="0 0 24 24" fill="none" stroke={INK} strokeWidth="1.700" aria-hidden="true">
              <path d="m16 6-8.414 8.586a2 2 0 0 0 2.829 2.829l8.414-8.586a4 4 0 1 0-5.657-5.657l-8.379 8.551a6 6 0 1 0 8.485 8.485l8.379-8.551" />
            </svg>
          </Slot>
          <Slot $w={48} $h={48} aria-label="Signatures">
            <Icon w={26} h={24} c="#454c5e"><path d="M11 19l-9 2L4 10l8-5 7 8-3 4M11 5l3-4 8 9-3 3M17 16h8M14 20h11M12 23h13" /><circle cx="9" cy="13" r="1" /></Icon>
          </Slot>
          <Slot $w={48} $h={48} aria-label="Convert">
            <Icon w={26} h={24} c="#454c5e"><path d="M7 12V1h14l3 3v18H12M11 7v7l4-3 4 3V7M2 12v7h6M5 15l4 4-4 4" /></Icon>
          </Slot>
        </Rail>
        <Panel>
          <PanelHead>Thumbnail<Slot $w={17} $h={24} aria-label="Close panel"><Cross c="#9a9fac" /></Slot></PanelHead>
          <SizeRow>
            <Picture w={19} h={17} />
            <Slider type="range" aria-label="Thumbnail size" $w={240} $dot={18} value={size}
              onChange={e => setSize(+e.target.value)} style={{ ['--fill' as any]: size + '%' }} />
            <Picture w={25} h={22} />
          </SizeRow>
          <ListArea><Thumbnails /><VBar /></ListArea>
          <HBar />
        </Panel>
        <Canvas>
          <Sheet>
            <Lead><Mark>A complete keyword research file is provided with this document. </Mark></Lead>
            <H1><Mark>Offsite</Mark></H1>
            <H2><Mark>Backlinks Profile Analysis</Mark></H2>
            <Body>{bodyLines.map(t => <p key={t}><Mark>{t}</Mark></p>)}</Body>
            <Stats>
              <Stat $w={134}>
                <svg width="104" height="104" viewBox="0 0 104 104" role="img" aria-label="Authority score 30">
                  <circle cx="51" cy="52" r="42" fill="none" stroke="#dfe2e4" strokeWidth="18" />
                  <path d="M51 10A42 42 0 0 1 91 65" fill="none" stroke="#67aced" strokeWidth="18" />
                  <path d="M51 0v21M81 61l20 7" stroke="#fff" strokeWidth="2" />
                  <text x="51" y="61" fontSize="26" fontWeight="700" textAnchor="middle" fill="#000">30</text>
                </svg>
              </Stat>
              <Stat $w={278} $line>
                <StatTitle>Authority Score <i>i</i></StatTitle>
                <svg width="191" height="56" viewBox="0 -14 191 56" aria-hidden="true">
                  <path d="M0 11H18L32 4H92L104 8L116 4H140L154 8L191 10V42H0z" fill="#d4e5f6" />
                  <path d="M0 10H18L32 4H92L104 8L116 4H140L154 8L191 10" fill="none" stroke="#67aced" strokeWidth="6" />
                </svg>
              </Stat>
              <Gap $w={48} />
              <Stat $w={317} $line>
                <StatTitle>Referring Domains <i>i</i></StatTitle>
                <Figures><strong>390</strong><ins>+17</ins><del>-24</del></Figures>
              </Stat>
              <Gap $w={48} />
              <Stat $w={260}>
                <StatTitle>Backlinks <i>i</i></StatTitle>
                <Figures><strong>3.2K</strong><ins>+111</ins><del>-1.2K</del></Figures>
              </Stat>
            </Stats>
          </Sheet>
          <Scroller>
            <Arrow aria-label="Scroll up" />
            <Grip />
            <Arrow $down aria-label="Scroll down" />
          </Scroller>
        </Canvas>
      </Workspace>

      <StatusBar>
        <NavToggle><Icon w={22}><path d="M1 1h20v20H1zM8 4v14" /></Icon>Navigation</NavToggle>
        <Rule $h={22} />
        <Gap $w={10} />
        <Slot $w={36} aria-label="First page"><Icon w={15} h={19} c={gray} s={1.5}><path d="M1 0v19M14 1L5 9.500l9 8.500" /></Icon></Slot>
        <Slot $w={36} aria-label="Previous page"><Chevron dir="left" c={gray} /></Slot>
        <Gap $w={9} />
        <PageBox $w={165} $h={32} aria-label="Current page" value={page} onChange={e => setPage(e.target.value)} />
        <Gap $w={10} />
        <Slot $w={35} aria-label="Next page"><Chevron dir="right" /></Slot>
        <Slot $w={35} aria-label="Last page"><Icon w={15} h={19} s={1.5}><path d="M14 0v19M1 1l9 8.500-9 8.500" /></Icon></Slot>
        <Rule $h={22} $m={12} />
        <Gap $w={10} />
        <Slot $w={36} aria-label="Back"><Icon w={22} h={23}><path d="M1 1h20v21H1zM17 11H6M10 7l-4 4 4 4" /></Icon></Slot>
        <Slot $w={36} aria-label="Forward"><Icon w={22} h={23} c={gray}><path d="M1 1h20v21H1zM5 11h11M12 7l4 4-4 4" /></Icon></Slot>
        <Rule $h={22} />
        <Gap />
        <Slot $w={34} aria-label="Send to phone"><Icon w={20} h={24} c="#454c5e"><path d="M5 8V1h14v22H5v-6M0 12h11M7 8l4 4-4 4M5 18h14M11 20.500h2" /></Icon></Slot>
        <Slot $w={48} aria-label="Eye protection"><SmallEye /><Caret /></Slot>
        <Rule $h={22} $m={12} />
        <Gap $w={9} />
        <Slot $w={36} $on aria-label="Continuous view"><Continuous /></Slot>
        <Rule $h={22} $m={10} />
        <Gap $w={10} />
        <Slot $w={36} $on aria-label="Single page view"><SinglePage /></Slot>
        <Slot $w={40} aria-label="Two page view"><TwoPages /></Slot>
        <Rule $h={22} $m={8} />
        <Play aria-label="Play"><Icon w={10} h={14} s={0}><path d="M0 0l10 7-10 7z" fill="#fff" /></Icon></Play>
        <Rule $h={22} />
        <Gap $w={9} />
        <Slot $w={38} aria-label="Actual size view"><OneToOne /></Slot>
        <Slot $w={38} aria-label="Fit page view"><FitPage /></Slot>
        <Slot $w={36} aria-label="Fit width view"><FitWidth /></Slot>
        <ZoomPick><select aria-label="Zoom"><option>111%</option></select><Caret /></ZoomPick>
        <Slot $w={36} aria-label="Decrease zoom"><Icon w={16} c="#38435c" s={4}><path d="M0 8h16" /></Icon></Slot>
        <Gap $w={8} />
        <Slider type="range" aria-label="Zoom slider" $w={207} $dot={18} value={zoom}
          onChange={e => setZoom(+e.target.value)} style={{ ['--fill' as any]: zoom + '%' }} />
        <Gap $w={7} />
        <Slot $w={36} aria-label="Increase zoom"><Icon w={16} c="#38435c" s={3}><path d="M0 8h16M8 0v16" /></Icon></Slot>
        <Slot $w={36} aria-label="Full screen">
          <Icon w={22} s={1.5}><path d="M1 7V1h6M1 1l7 7M15 1h6v6M21 1l-7 7M1 15v6h6M1 21l7-7M21 15v6h-6M21 21l-7-7" /></Icon>
        </Slot>
        <Gap $w={15} />
      </StatusBar>

      <TaskBar>
        <Apps>
          <AppButton aria-label="Start">
            <svg width="35" height="35" viewBox="0 0 35 35" aria-hidden="true">
              <defs><linearGradient id="win" x1="0" y1="0" x2="1" y2="1"><stop stopColor="#4cd0fc" /><stop offset="1" stopColor="#0670cf" /></linearGradient></defs>
              <path d="M0 0h17v17H0zM18 0h17v17H18zM0 18h17v17H0zM18 18h17v17H18z" fill="url(#win)" />
            </svg>
          </AppButton>
          <AppButton aria-label="Search"><Icon w={33} h={36} c="#262626" s={3}><circle cx="19" cy="15" r="12.500" /><path d="M11 24l-9 9" strokeWidth="5" /></Icon></AppButton>
          <AppButton $dot aria-label="Chrome profile 1"><Chrome badge="crest" /></AppButton>
          <AppButton aria-label="Chrome profile 2"><Chrome badge="man" /></AppButton>
          <AppButton aria-label="Chrome profile 3"><Chrome badge="power" /></AppButton>
          <AppButton aria-label="Files">
            <svg width="36" height="34" viewBox="0 0 36 34" aria-hidden="true">
              <path d="M0 2q0-2 2-2h9l4 4h21v8H0z" fill="#dd9d08" />
              <path d="M0 6h13l3-2h20v29H0z" fill="#fccf3e" />
              <path d="M6 33v-8q0-3 3-3h18q3 0 3 3v8z" fill="#1276c8" />
              <path d="M11 28h14" stroke="#0b4d88" strokeWidth="2" />
            </svg>
          </AppButton>
          <AppButton aria-label="Illustrator"><AiLogo>Ai</AiLogo></AppButton>
          <AppButton aria-label="Chrome profile 4"><Chrome badge="teal" /></AppButton>
          <AppButton $on aria-label="WPS Office"><Wps /></AppButton>
        </Apps>
        <Tray>
          <Slot $w={34} aria-label="Hidden icons"><Chevron dir="up" w={18} h={11} c="#222" /></Slot>
          <Gap $w={8} />
          <Slot $w={46} aria-label="Display">
            <svg width="24" height="24" viewBox="0 0 24 24" aria-hidden="true">
              <path d="M1 1h22v17H1z" fill="#808080" /><path d="M1 18V1h22" fill="none" stroke="#10107a" strokeWidth="1.500" />
              <path d="M0 20h11v3H0zM13 20h11v3H13z" fill="#88889a" stroke="#10107a" strokeWidth=".7" />
            </svg>
          </Slot>
          <Slot $w={50} aria-label="Cloud">
            <svg width="24" height="24" viewBox="0 0 24 24" aria-hidden="true">
              <rect width="24" height="24" rx="3" fill="#fff" />
              <path d="M13 18H6q-4 0-4-4 0-3 3-4 1-5 6-5t7 5q4 1 4 4 0 4-4 4h-2L9 11M13 18l-3-4" fill="none" stroke="#3c7cf6" strokeWidth="2" />
            </svg>
          </Slot>
          <Slot $w={58} aria-label="Keyboard"><Icon w={24} h={18} c="#222" s={1.5}><rect x="1" y="1" width="22" height="16" rx="2" /><path d="M5 6h14M5 9h14" strokeDasharray="2 2" /><path d="M7 13h10" /></Icon></Slot>
          <Slot $w={50} aria-label="Wi-Fi"><Icon w={24} h={20} c="#222"><path d="M1 7q11-10 22 0M5 11q7-7 14 0M8 14q4-4 8 0" /><circle cx="12" cy="17" r="1.500" /></Icon></Slot>
          <Slot $w={24} aria-label="Volume"><Icon w={24} h={20} c="#222" s={1.5}><path d="M1 7h4l6-5v16l-6-5H1zM14 7q2 3 0 6M17 4q4 6 0 12M20 2q6 8 0 16" /></Icon></Slot>
          <Slot $w={44} aria-label="Battery"><Icon w={24} h={16} c="#222"><rect x="1" y="1" width="19" height="14" rx="3" /><path d="M22 5v6" /><path d="M4 4h4v8H4z" fill="#222" stroke="none" /></Icon></Slot>
          <Clock>1:13 AM<br />8/4/2022</Clock>
          <Count>2</Count>
        </Tray>
      </TaskBar>
    </Shell>
  );
}
